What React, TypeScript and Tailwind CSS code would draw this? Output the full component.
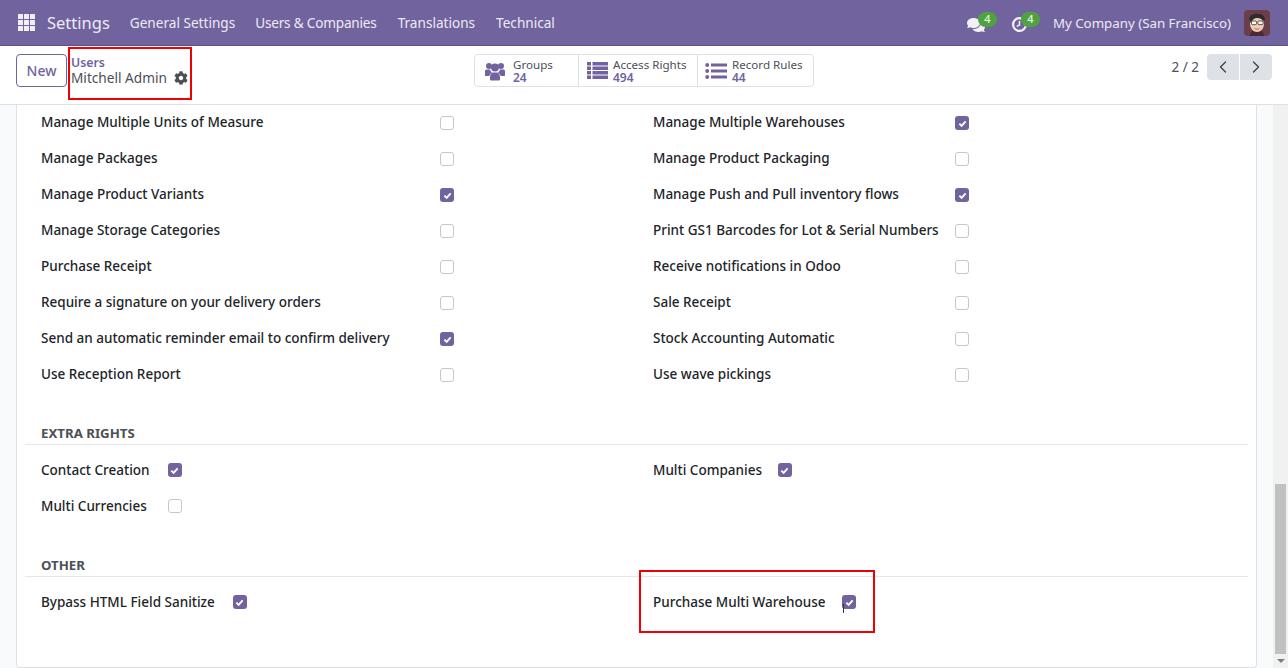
import { ChevronLeft, ChevronRight } from "lucide-react"
import { FaCog, FaComments } from "react-icons/fa"
import { ReactNode } from "react"

const leftRows: [string, boolean][] = [
  ["Manage Multiple Units of Measure", false],
  ["Manage Packages", false],
  ["Manage Product Variants", true],
  ["Manage Storage Categories", false],
  ["Purchase Receipt", false],
  ["Require a signature on your delivery orders", false],
  ["Send an automatic reminder email to confirm delivery", true],
  ["Use Reception Report", false],
]

const rightRows: [string, boolean][] = [
  ["Manage Multiple Warehouses", true],
  ["Manage Product Packaging", false],
  ["Manage Push and Pull inventory flows", true],
  ["Print GS1 Barcodes for Lot & Serial Numbers", false],
  ["Receive notifications in Odoo", false],
  ["Sale Receipt", false],
  ["Stock Accounting Automatic", false],
  ["Use wave pickings", false],
]

const Check = ({ on }: { on: boolean }) => (
  <span
    className={
      on
        ? "flex h-[14px] w-[14px] shrink-0 items-center justify-center rounded-[3px] bg-[#71639e]"
        : "block h-[14px] w-[14px] shrink-0 rounded-[3px] border border-[#c4c8cc] bg-white"
    }
  >
    {on && (
      <svg viewBox="0 0 10 10" className="h-[9px] w-[9px]">
        <path d="M1.5 5.2 4 7.6 8.5 2.6" fill="none" stroke="#fff" strokeWidth="2.1" />
      </svg>
    )}
  </span>
)

const FixedRow = ({ label, on, width }: { label: string; on: boolean; width: string }) => (
  <div className="flex h-9 items-center">
    <span className={`${width} whitespace-nowrap pb-[2px] text-[13.5px] font-medium text-[#212529]`}>{label}</span>
    <Check on={on} />
  </div>
)

const AutoRow = ({ label, on, gap }: { label: string; on: boolean; gap: string }) => (
  <div className={`flex h-9 items-center ${gap}`}>
    <span className="whitespace-nowrap text-[13.5px] font-medium text-[#212529]">{label}</span>
    <Check on={on} />
  </div>
)

const SectionTitle = ({ children }: { children: ReactNode }) => (
  <div className="mx-2 border-b border-[#e5e7e9] pb-[2px] pl-4 text-[13.25px] leading-[18px] font-bold text-[#4b5058]">
    {children}
  </div>
)

const UsersIcon = () => (
  <svg viewBox="0 0 20 21" className="h-[21px] w-[20px]" fill="#71639e">
    <circle cx="4" cy="6" r="3" />
    <circle cx="16" cy="6" r="3" />
    <circle cx="10" cy="7.5" r="4" />
    <path d="M0 11c0-1 1-1.500 2-1.500h3c.5 1.500 1 2.500 2 3.200C5.500 13.500 4.500 15 4.300 16H1c-.6 0-1-.4-1-1zM20 11c0-1-1-1.500-2-1.500h-3c-.5 1.500-1 2.500-2 3.200 1.500.8 2.500 2.300 2.700 3.300H19c.6 0 1-.4 1-1z" />
    <path d="M5 17c0-3 2-4.500 3-4.500h4c1 0 3 1.500 3 4.500v2c0 1-.8 1.500-1.500 1.500h-7C5.800 20.500 5 20 5 19z" />
  </svg>
)

const AccessIcon = () => (
  <svg viewBox="0 0 21 17" className="h-[17px] w-[21px]" fill="#71639e">
    {[0, 4.5, 9, 13.5].map((y) => (
      <g key={y}>
        <rect x="0" y={y} width="4" height="3.500" />
        <rect x="5.500" y={y} width="15.500" height="3.500" />
      </g>
    ))}
  </svg>
)

const RecordIcon = () => (
  <svg viewBox="0 0 22 16" className="h-[16px] w-[22px]" fill="#71639e">
    {[2, 8, 14].map((y) => (
      <g key={y}>
        <circle cx="2.200" cy={y} r="2" />
        <rect x="6" y={y - 1.5} width="16" height="3" />
      </g>
    ))}
  </svg>
)

const StatButton = ({ icon, title, value, width, col, border }: { icon: ReactNode; title: string; value: string; width: string; col: string; border?: boolean }) => (
  <div className={`flex h-full items-center ${width} ${border ? "border-l border-[#dee2e6]" : ""}`}>
    <div className={`flex shrink-0 ${col}`}>{icon}</div>
    <div className="flex flex-col text-[11.6px] leading-[13px]">
      <span className="text-[#4b5058]">{title}</span>
      <span className="text-[12px] font-semibold text-[#71639e]">{value}</span>
    </div>
  </div>
)

const Avatar = () => (
  <svg viewBox="0 0 26 26" className="h-[26px] w-[26px] rounded-[4px]">
    <rect width="26" height="26" fill="#6b3f4a" />
    <path d="M6 26c0-4 3-6 7-6s7 2 7 6z" fill="#4a2a35" />
    <ellipse cx="13" cy="14" rx="7" ry="8" fill="#f2cdb4" />
    <path d="M5 9c1-5 6-6 10-5 3 0 6 2 6 6l-2 1c-1-2-3-3-6-3-2 0-4 1-5 3l-1 2z" fill="#2d2b2e" />
    <rect x="7.500" y="11" width="5" height="3.600" rx="1" fill="#fff" stroke="#333" strokeWidth=".8" />
    <rect x="14" y="11" width="5" height="3.600" rx="1" fill="#fff" stroke="#333" strokeWidth=".8" />
    <path d="M10.500 18.500c1.500 1 3.500 1 5 0" fill="none" stroke="#a5604f" strokeWidth=".9" />
  </svg>
)

const Badge = ({ children, left }: { children: ReactNode; left: string }) => (
  <span className={`absolute top-0 ${left} flex h-[15px] w-[19px] items-center justify-center rounded-full bg-[#4ea33f] text-[11px] font-medium text-[#e9f5e6]`}>
    {children}
  </span>
)

export default function App() {
  return (
    <div className="relative flex h-[668px] w-[1288px] flex-col overflow-hidden bg-white font-['Noto_Sans',sans-serif] text-[#212529]">
      <header className="flex h-[46px] shrink-0 items-center border-b border-[#5d5283] bg-[#71639e] pl-[18px] pr-[18px] text-white">
        <div className="grid h-[17px] w-[17px] grid-cols-3 gap-[1.5px]">
          {Array.from({ length: 9 }).map((_, i) => (
            <span key={i} className="bg-[#f0eef5]" />
          ))}
        </div>
        <span className="ml-[12px] pt-[2px] text-[16.5px] text-[#eeeaf5]">Settings</span>
        <nav className="ml-[20px] flex gap-[20px] pt-[2px] text-[13.6px] text-[#eeeaf5]">
          <span>General Settings</span>
          <span className="tracking-[-0.2px]">Users &amp; Companies</span>
          <span className="ml-[1px]">Translations</span>
          <span className="ml-[1px]">Technical</span>
        </nav>
        <div className="ml-auto flex items-center">
          <div className="relative mr-[14px] h-[22px] w-[30px] pt-[4px]">
            <FaComments className="h-[18px] w-[18px] text-[#f3f1f7]" />
            <Badge left="left-[11px]">4</Badge>
          </div>
          <div className="relative mr-[12px] h-[22px] w-[30px] pt-[4px]">
            <svg viewBox="0 0 18 18" className="h-[17px] w-[17px]">
              <circle cx="9" cy="9" r="6.800" fill="none" stroke="#f3f1f7" strokeWidth="2.400" />
              <path d="M9 5v4.500L6 11" fill="none" stroke="#f3f1f7" strokeWidth="1.600" />
            </svg>
            <Badge left="left-[10px]">4</Badge>
          </div>
          <span className="mr-[13px] pt-[2px] text-[13.3px] text-[#eeeaf5]">My Company (San Francisco)</span>
          <Avatar />
        </div>
      </header>

      <div className="flex h-[59px] shrink-0 items-start border-b border-[#dee2e6] pl-4 pr-4 pt-2">
        <div className="flex h-[33px] w-[51px] items-center justify-center rounded-[4px] border border-[#71639e] text-[14px] font-medium text-[#71639e]">
          New
        </div>
        <div className="ml-[4px] flex w-[403px] flex-col pt-[1px]">
          <span className="text-[12.3px] leading-[15px] font-semibold text-[#71639e]">Users</span>
          <span className="flex items-center text-[13.65px] leading-[16px] text-[#4b5058]">
            Mitchell Admin
            <FaCog className="ml-[7px] h-[14px] w-[14px]" />
          </span>
        </div>
        <div className="flex h-[33px] w-[340px] items-center rounded-[4px] border border-[#dee2e6]">
          <StatButton width="w-[103px]" col="w-[38px] pl-[10px]" title="Groups" value="24" icon={<UsersIcon />} />
          <StatButton width="w-[119px]" col="w-[34px] pl-[8px]" border title="Access Rights" value="494" icon={<AccessIcon />} />
          <StatButton width="w-[116px]" col="w-[34px] pl-[7px]" border title="Record Rules" value="44" icon={<RecordIcon />} />
        </div>
        <div className="ml-auto flex items-center">
          <span className="mr-2 text-[13.5px] text-[#4b5058]">2 / 2</span>
          <div className="flex h-[26px] items-center gap-px text-[#374151]">
            <span className="flex h-full w-[32px] items-center justify-center rounded-l-[4px] bg-[#dee2e6]">
              <ChevronLeft size={20} strokeWidth={1.5} />
            </span>
            <span className="flex h-full w-[32px] items-center justify-center rounded-r-[4px] bg-[#dee2e6]">
              <ChevronRight size={20} strokeWidth={1.5} />
            </span>
          </div>
        </div>
      </div>

      <div className="flex min-h-0 flex-1 bg-[#f9fafb]">
        <div className="ml-4 mb-px h-[563px] w-[1241px] rounded-b-[4px] border-x border-b border-[#dee2e6] bg-white">
          <div className="grid grid-cols-[612px_1fr] pl-[24px]">
            <div>
              {leftRows.map(([label, on]) => (
                <FixedRow key={label} label={label} on={on} width="w-[399px]" />
              ))}
            </div>
            <div>
              {rightRows.map(([label, on]) => (
                <FixedRow key={label} label={label} on={on} width="w-[302px]" />
              ))}
            </div>
          </div>

          <div className="mt-[31px]">
            <SectionTitle>EXTRA RIGHTS</SectionTitle>
          </div>
          <div className="grid grid-cols-[612px_1fr] pt-[7px] pl-[24px]">
            <div>
              <AutoRow label="Contact Creation" on gap="gap-[18px]" />
              <AutoRow label="Multi Currencies" on={false} gap="gap-[21px]" />
            </div>
            <div>
              <AutoRow label="Multi Companies" on gap="gap-[16px]" />
            </div>
          </div>

          <div className="mt-[32px]">
            <SectionTitle>OTHER</SectionTitle>
          </div>
          <div className="grid grid-cols-[612px_1fr] pt-[7px] pl-[24px]">
            <AutoRow label="Bypass HTML Field Sanitize" on gap="gap-[18px]" />
            <AutoRow label="Purchase Multi Warehouse" on gap="gap-[17px]" />
          </div>
        </div>

        <div className="ml-auto flex w-[15px] flex-col items-center bg-[#f1f1f1]">
          <div className="mt-[379px] h-[170px] w-[11px] bg-[#c1c1c1]" />
          <div className="mt-[5px] h-0 w-0 border-x-[4px] border-t-[4px] border-x-transparent border-t-[#7d7d7d]" />
        </div>
      </div>

      <div className="absolute top-[47px] left-[68px] h-[53px] w-[124px] border-2 border-[#f00000]" />
      <div className="absolute top-[570px] left-[639px] h-[63px] w-[236px] border-2 border-[#f00000]" />
      <div className="absolute top-[604px] left-[843px] h-[9px] w-px bg-[#333]" />
    </div>
  )
}
